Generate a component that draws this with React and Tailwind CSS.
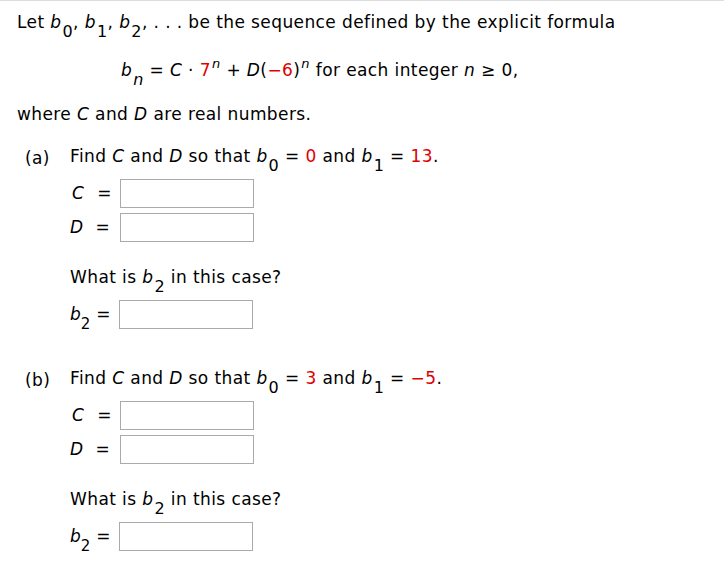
import React from "react";

const Sub = ({ children }) => (
  <span className="relative top-[9px] ml-[1px] text-[16px] not-italic">{children}</span>
);

const Sup = ({ children }) => (
  <span className="relative -top-[8px] ml-[1px] text-[13px]">{children}</span>
);

const Red = ({ children }) => <span className="text-[#e00000]">{children}</span>;

const Var = ({ children }) => <i>{children}</i>;

function Field({ label, gap = "mt-[5px]" }) {
  return (
    <div className={`flex items-center h-[29px] ${gap}`}>
      <div className="w-[50px] whitespace-nowrap">{label}</div>
      <div className="w-[134px] h-[29px] border border-[#aaaaaa] bg-white" />
    </div>
  );
}

function Part({ tag, b0, b1 }) {
  return (
    <div className="flex">
      <div className="w-[53px] pl-[8px] shrink-0">{tag}</div>
      <div>
        <div className="h-[20px] leading-[20px] whitespace-nowrap">
          Find <Var>C</Var> and <Var>D</Var> so that <Var>b</Var>
          <Sub>0</Sub> = <Red>{b0}</Red> and <Var>b</Var>
          <Sub>1</Sub> = <Red>{b1}</Red>.
        </div>
        <Field
          gap="mt-[13px]"
          label={
            <>
              <span className="pl-[2px]"><Var>C</Var></span>
              <span className="pl-[13px]">=</span>
            </>
          }
        />
        <Field
          label={
            <>
              <Var>D</Var>
              <span className="pl-[12px]">=</span>
            </>
          }
        />
        <div className="h-[20px] leading-[20px] mt-[25px] whitespace-nowrap">
          What is <Var>b</Var>
          <Sub>2</Sub> in this case?
        </div>
        <div className="flex items-center h-[29px] mt-[13px]">
          <div className="w-[49px] whitespace-nowrap tracking-normal">
            <Var>b</Var>
            <span className="relative top-[9px] text-[15px]">2</span>
            <span className="pl-[6px]">=</span>
          </div>
          <div className="w-[134px] h-[29px] border border-[#aaaaaa] bg-white" />
        </div>
      </div>
    </div>
  );
}

export default function App() {
  return (
    <div
      className="min-h-screen bg-white text-black text-[17px] tracking-[0.4px] border-t border-[#dddddd] px-[17px] pt-[11px]"
      style={{ fontFamily: '"DejaVu Sans", Verdana, sans-serif' }}
    >
      <div className="h-[20px] leading-[20px] whitespace-nowrap">
        Let <Var>b</Var>
        <Sub>0</Sub>, <Var>b</Var>
        <Sub>1</Sub>, <Var>b</Var>
        <Sub>2</Sub>, . . . be the sequence defined by the explicit formula
      </div>
      <div className="h-[20px] leading-[20px] mt-[28px] pl-[104px] whitespace-nowrap">
        <Var>b</Var>
        <Sub>
          <i>n</i>
        </Sub>{" "}
        = <Var>C</Var> · <Red>7</Red>
        <Sup>
          <i>n</i>
        </Sup>{" "}
        + <Var>D</Var>(<Red>−6</Red>)
        <Sup>
          <i>n</i>
        </Sup>{" "}
        for each integer <Var>n</Var> ≥ 0,
      </div>
      <div className="h-[20px] leading-[20px] mt-[24px] whitespace-nowrap">
        where <Var>C</Var> and <Var>D</Var> are real numbers.
      </div>
      <div className="mt-[22px]">
        <Part tag="(a)" b0="0" b1="13" />
      </div>
      <div className="mt-[39px]">
        <Part tag="(b)" b0="3" b1="−5" />
      </div>
    </div>
  );
}
